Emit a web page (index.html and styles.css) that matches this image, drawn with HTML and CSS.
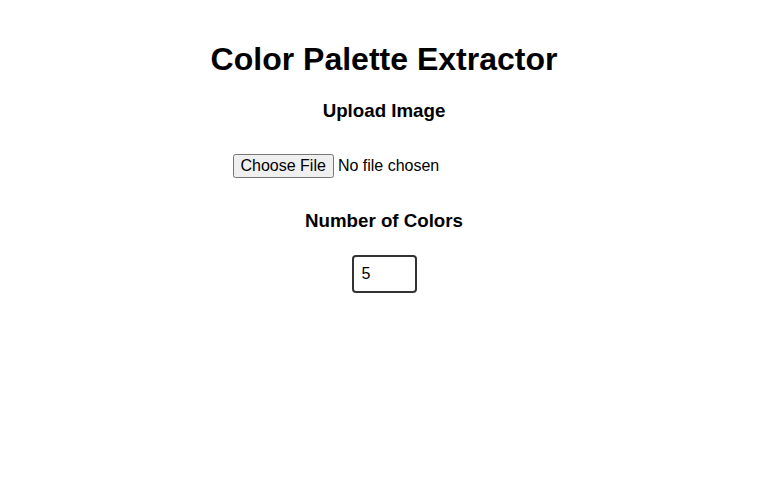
FILE: index.html
```html
<!DOCTYPE html>
<html lang="en">
<head>
    <meta charset="UTF-8">
    <meta name="viewport" content="width=device-width, initial-scale=1.0">
    <title>Color Palette Extractor</title>
    <link rel="stylesheet" href="styles.css">
</head>
<body>
    <div class="container">
        <h1>Color Palette Extractor</h1>

        <div class="section">
            <h3>Upload Image</h3>
            <input type="file" id="image-input" accept="image/*">
        </div>

        <div class="section">
            <h3>Number of Colors</h3>
            <input type="number" id="color-count" value="5" min="1" max="20">
        </div>

        <div class="palette" id="palette">
        </div>
    </div>
</body>
</html>
```

FILE: styles.css
```css
body {
    margin: 0;
    padding: 20px;
    font-family: 'Liberation Sans', Arial, sans-serif;
    background: white;
    color: black;
}

.container {
    max-width: 800px;
    margin: 0 auto;
    text-align: center;
}

h1 {
    font-size: 32px;
}

h3 {
    font-size: 18.72px;
}

.section {
    margin-bottom: 20px;
}

input[type="file"] {
    font-size: 16px;
    font-family: inherit;
    margin: 13px 0 12px;
}

input[type="number"] {
    width: 45px;
    margin-top: 5px;
    padding: 8px;
    font-size: 16px;
    font-family: inherit;
    border: 2px solid #333;
    border-radius: 4px;
}

.palette {
    display: flex;
    justify-content: center;
    gap: 10px;
    margin-top: 20px;
}
```
